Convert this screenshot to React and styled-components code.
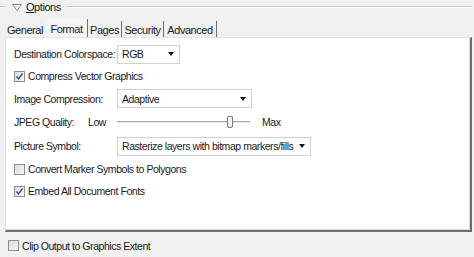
import React from 'react';
import styled, { createGlobalStyle } from 'styled-components';

const Global = createGlobalStyle`
  html, body { margin: 0; padding: 0; background: #f0f0f0; }
  body { font-family: "Liberation Sans", Arial, sans-serif; }
`;

const Root = styled.div`
  width: 474px;
  height: 257px;
  background: #f0f0f0;
  color: #1a1a1a;
  font-size: 10.5px;
  letter-spacing: -0.45px;
  display: flex;
  flex-direction: column;
  overflow: hidden;
`;

const GroupHeader = styled.div`
  height: 14px;
  display: flex;
  align-items: center;
  gap: 4px;
  padding-right: 2px;
`;

const Rule = styled.div`
  height: 0;
  border-top: 1px solid #c4c4c4;
  border-bottom: 1px solid #ffffff;
  flex: ${(p) => (p.$grow ? 1 : 'none')};
  width: ${(p) => (p.$grow ? 'auto' : '5px')};
`;

const Caret = styled.svg`
  width: 10px;
  height: 7px;
  margin-left: 3px;
`;

const GroupTitle = styled.span`
  margin-right: 2px;
  font-size: 11px;
  u { text-decoration: underline; }
`;

const TabStrip = styled.div`
  display: flex;
  height: 18px;
  margin-top: 5px;
  padding-left: 5px;
  align-items: stretch;
`;

const Tab = styled.div`
  width: ${(p) => p.$w}px;
  box-sizing: border-box;
  display: flex;
  align-items: center;
  justify-content: center;
  padding-top: 1px;
  font-size: 11px;
  border-right: 1px solid ${(p) => (p.$first ? 'transparent' : '#6f6f6f')};
  background: ${(p) => (p.$active ? '#f4f4f4' : 'transparent')};
  margin-top: ${(p) => (p.$active ? '0' : '2px')};
`;

const Panel = styled.div`
  margin: 0 2px 0 5px;
  height: 195px;
  box-sizing: border-box;
  background: #ffffff;
  border-left: 1px solid #e3e3e3;
  border-top: 1px solid #e3e3e3;
  border-right: 2px solid #6e6e6e;
  border-bottom: 2px solid #6e6e6e;
  box-shadow: inset -1px -1px 0 #d8d8d8;
  padding: 5px 0 0 8px;
  display: flex;
  flex-direction: column;
`;

const Row = styled.div`
  height: ${(p) => p.$h}px;
  display: flex;
  align-items: center;
`;

const Label = styled.span`
  width: ${(p) => p.$w || 103}px;
  flex: none;
  white-space: nowrap;
`;

const Select = styled.div`
  width: ${(p) => p.$w}px;
  height: 19px;
  box-sizing: border-box;
  border: 1px solid #d0d0d0;
  background: #ffffff;
  display: flex;
  align-items: center;
  justify-content: space-between;
  padding: 0 5px 0 4px;
  white-space: nowrap;
`;

const Arrow = styled.span`
  width: 0;
  height: 0;
  border-left: 3.5px solid transparent;
  border-right: 3.5px solid transparent;
  border-top: 4px solid #111;
`;

const CheckRow = styled.label`
  display: flex;
  align-items: center;
  gap: 3px;
  white-space: nowrap;
`;

const Box = styled.span`
  width: 11px;
  height: 11px;
  box-sizing: border-box;
  border: 1px solid #8f8f8f;
  background: linear-gradient(135deg, #dcdcdc, #f6f6f6);
  display: flex;
  align-items: center;
  justify-content: center;
`;

const Slider = styled.div`
  width: 133px;
  height: 14px;
  position: relative;
  margin-right: 12px;
`;

const Track = styled.div`
  position: absolute;
  left: 0;
  right: 0;
  top: 6px;
  border-top: 1px solid #a8a8a8;
  border-bottom: 1px solid #e8e8e8;
`;

const Thumb = styled.div`
  position: absolute;
  top: 1px;
  width: 4px;
  height: 10px;
  border: 1px solid #7a7a7a;
  border-radius: 1px 1px 2px 2px;
  background: #f2f2f2;
`;

const Footer = styled.div`
  flex: 1;
  display: flex;
  align-items: center;
  padding-left: 8px;
  padding-top: 2px;
`;

const Check = ({ checked, children }) => (
  <CheckRow>
    <Box>
      {checked && (
        <svg width="9" height="9" viewBox="0 0 9 9">
          <path d="M1.5 4.5 L3.5 6.8 L7.5 1.5" fill="none" stroke="#3b4f9e" strokeWidth="1.4" />
        </svg>
      )}
    </Box>
    <span>{children}</span>
  </CheckRow>
);

const tabs = [
  { name: 'General', w: 41 },
  { name: 'Format', w: 42, active: true },
  { name: 'Pages', w: 34 },
  { name: 'Security', w: 42 },
  { name: 'Advanced', w: 53 },
];

const App = () => (
  <Root>
    <Global />
    <GroupHeader>
      <Rule />
      <Caret viewBox="0 0 10 7">
        <path d="M0.5 0.5 L9.5 0.5 L5 6.5 Z" fill="none" stroke="#8a8a8a" strokeWidth="1" />
      </Caret>
      <GroupTitle><u>O</u>ptions</GroupTitle>
      <Rule $grow />
    </GroupHeader>
    <TabStrip>
      {tabs.map((t, i) => (
        <Tab key={t.name} $w={t.w} $active={t.active} $first={i === 0}>
          {t.name}
        </Tab>
      ))}
    </TabStrip>
    <Panel>
      <Row $h={22}>
        <Label>Destination Colorspace:</Label>
        <Select $w={63}>RGB<Arrow /></Select>
      </Row>
      <Row $h={22}>
        <Check checked>Compress Vector Graphics</Check>
      </Row>
      <Row $h={23}>
        <Label>Image Compression:</Label>
        <Select $w={135}>Adaptive<Arrow /></Select>
      </Row>
      <Row $h={24}>
        <Label $w={74}>JPEG Quality:</Label>
        <Label $w={29}>Low</Label>
        <Slider>
          <Track />
          <Thumb style={{ left: 110 }} />
        </Slider>
        <span>Max</span>
      </Row>
      <Row $h={24}>
        <Label>Picture Symbol:</Label>
        <Select $w={194}>Rasterize layers with bitmap markers/fills<Arrow /></Select>
      </Row>
      <Row $h={22}>
        <Check>Convert Marker Symbols to Polygons</Check>
      </Row>
      <Row $h={22}>
        <Check checked>Embed All Document Fonts</Check>
      </Row>
    </Panel>
    <Footer>
      <Check>Clip Output to Graphics Extent</Check>
    </Footer>
  </Root>
);

export default App;
